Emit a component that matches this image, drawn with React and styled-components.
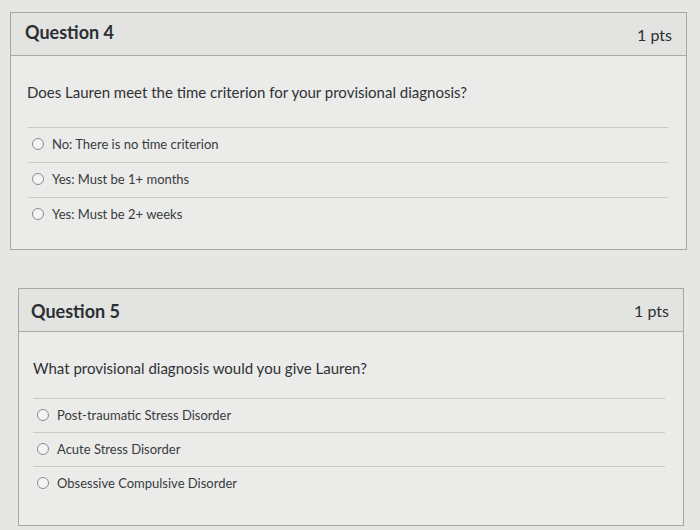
import React from 'react'
import styled, { createGlobalStyle } from 'styled-components'

const GlobalStyle = createGlobalStyle`
  html, body {
    margin: 0;
    padding: 0;
    background: #e6e6e4;
  }
  body {
    font-family: Lato, "Open Sans", "Liberation Sans", sans-serif;
    color: #2d3b45;
  }
`

const Page = styled.div`
  width: 700px;
  height: 530px;
  overflow: hidden;
  display: flex;
  flex-direction: column;
  gap: 38px;
  padding-top: 12px;
  box-sizing: border-box;
`

const Card = styled.section`
  margin-left: ${p => p.left}px;
  width: ${p => p.width}px;
  border: 1px solid #a7a8a6;
  background: #ebebe9;
  box-sizing: border-box;
`

const Header = styled.header`
  display: flex;
  align-items: center;
  justify-content: space-between;
  height: 42px;
  padding: 0 14px 0 ${p => p.pad}px;
  background: #e3e3e1;
  border-bottom: 1px solid #a9aaa8;
`

const Title = styled.h2`
  margin: 0;
  font-size: 18px;
  font-weight: 700;
  color: #2b2f33;
  transform: translateY(${p => p.shift}px);
`

const Points = styled.span`
  font-size: 16px;
  font-weight: 400;
  color: #2b2f33;
  transform: translateY(${p => p.shift}px);
`

const Body = styled.div`
  padding: ${p => p.top}px 18px ${p => p.bottom}px ${p => p.pad}px;
`

const Prompt = styled.p`
  margin: 0 0 ${p => p.gap}px;
  font-size: 15px;
  line-height: 20px;
  color: #2f3235;
`

const Answers = styled.ul`
  list-style: none;
  margin: 0 0 0 ${p => p.indent}px;
  padding: 0;
`

const Answer = styled.li`
  display: flex;
  align-items: center;
  gap: 8px;
  height: ${p => p.h}px;
  box-sizing: border-box;
  padding-left: 4px;
  padding-bottom: 2px;
  border-top: 1px solid #c9cac8;
  font-size: 13px;
  color: #383b3e;
`

const Radio = styled.span`
  width: 10px;
  height: 10px;
  border-radius: 50%;
  border: 1px solid #8a8c8e;
  background: #f4f4f3;
  flex-shrink: 0;
`

const questions = [
  {
    title: 'Question 4',
    left: 10,
    width: 677,
    pad: 14,
    bodyPad: 16,
    top: 26,
    bottom: 17,
    gap: 25,
    indent: 1,
    rowH: 35,
    titleShift: -2,
    ptsShift: 0,
    prompt: 'Does Lauren meet the time criterion for your provisional diagnosis?',
    answers: ['No: There is no time criterion', 'Yes: Must be 1+ months', 'Yes: Must be 2+ weeks'],
  },
  {
    title: 'Question 5',
    left: 18,
    width: 666,
    pad: 12,
    bodyPad: 14,
    top: 26,
    bottom: 25,
    gap: 20,
    indent: 0,
    rowH: 34,
    titleShift: 1,
    ptsShift: 0,
    prompt: 'What provisional diagnosis would you give Lauren?',
    answers: ['Post-traumatic Stress Disorder', 'Acute Stress Disorder', 'Obsessive Compulsive Disorder'],
  },
]

export default function App() {
  return (
    <>
      <GlobalStyle />
      <Page>
        {questions.map(q => (
          <Card key={q.title} left={q.left} width={q.width}>
            <Header pad={q.pad}>
              <Title shift={q.titleShift}>{q.title}</Title>
              <Points shift={q.ptsShift}>1 pts</Points>
            </Header>
            <Body top={q.top} bottom={q.bottom} pad={q.bodyPad}>
              <Prompt gap={q.gap}>{q.prompt}</Prompt>
              <Answers indent={q.indent}>
                {q.answers.map(a => (
                  <Answer key={a} h={q.rowH}>
                    <Radio />
                    {a}
                  </Answer>
                ))}
              </Answers>
            </Body>
          </Card>
        ))}
      </Page>
    </>
  )
}
